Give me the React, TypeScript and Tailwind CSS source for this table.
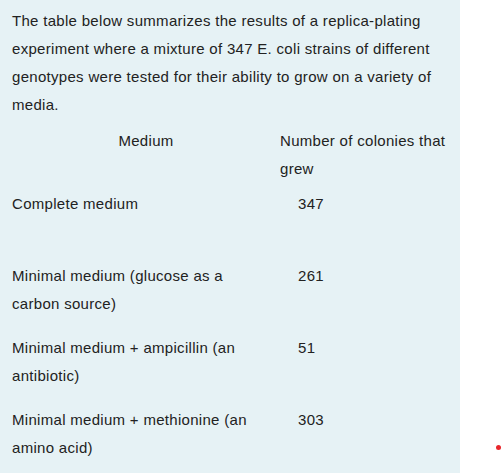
import React from "react";

const rows: [string, string][] = [
  ["Complete medium", "347"],
  ["Minimal medium (glucose as a carbon source)", "261"],
  ["Minimal medium + ampicillin (an antibiotic)", "51"],
  ["Minimal medium + methionine (an amino acid)", "303"],
];

export default function App() {
  return (
    <div
      className="relative w-[502px] h-[473px] bg-white text-[#222222] text-[15px] leading-[28px] tracking-[0.3px]"
      style={{ fontFamily: '"Liberation Sans", Arial, sans-serif' }}
    >
      <div className="w-[460px] h-[473px] bg-[#e6f2f5] pl-[12px] pt-[7px]">
        <p>
          The table below summarizes the results of a replica-plating experiment where a mixture of 347 E. coli strains of different genotypes were tested for their ability to grow on a variety of media.
        </p>
        <div className="mt-[8px] grid grid-cols-[268px_180px]">
          <div className="text-center">Medium</div>
          <div className="pr-[4px]">Number of colonies that grew</div>
        </div>
        <div className="mt-[7px] flex flex-col">
          {rows.map(([m, n]) => (
            <div key={m} className="grid grid-cols-[268px_180px] h-[72px]">
              <div className="pr-[16px]">{m}</div>
              <div className="pl-[18px]">{n}</div>
            </div>
          ))}
        </div>
      </div>
      <div className="absolute left-[496px] top-[445px] w-[5px] h-[5px] rounded-full bg-[#e8262b]" />
    </div>
  );
}
